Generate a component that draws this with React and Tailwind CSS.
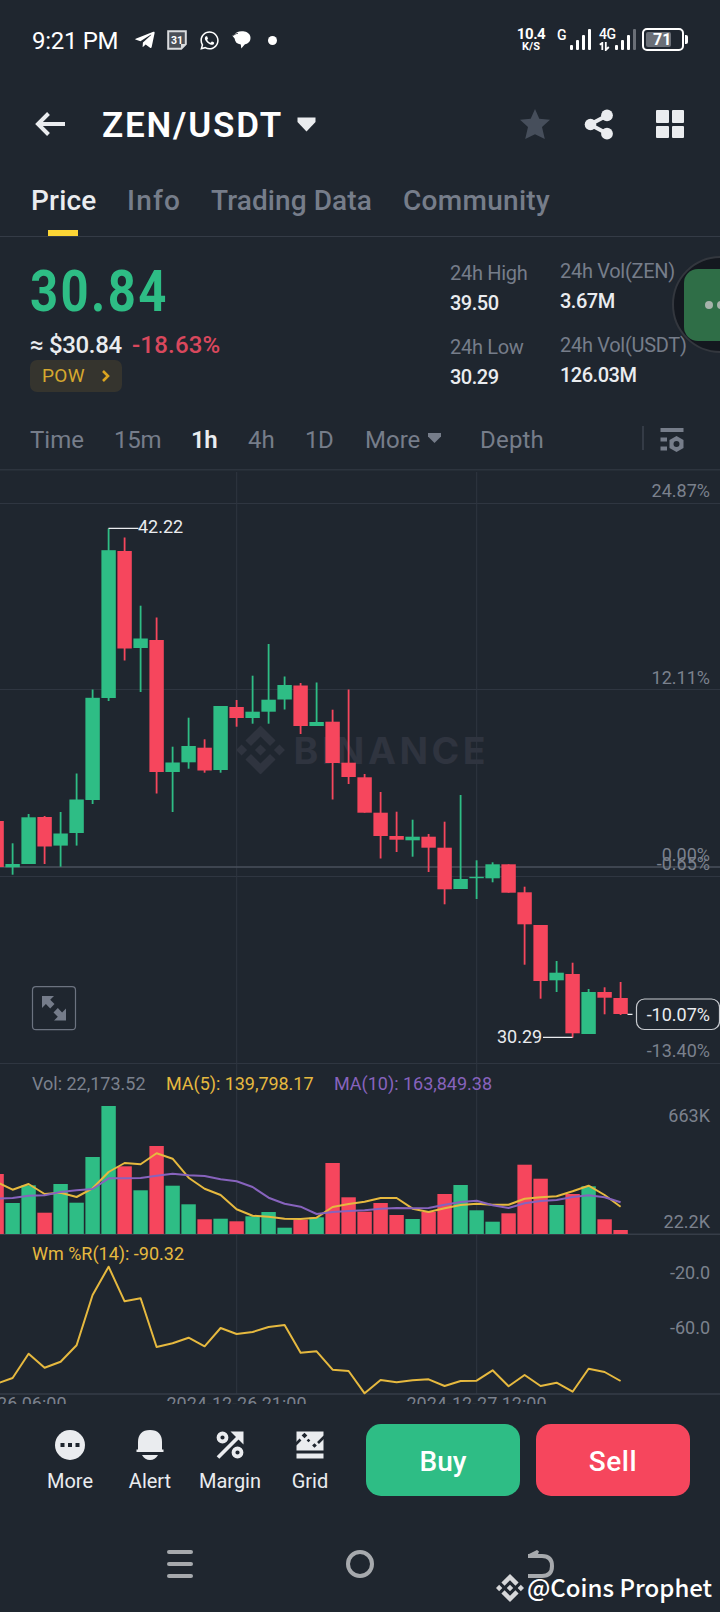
import { FaTelegramPlane, FaWhatsapp } from "react-icons/fa";

const GREEN = "#2ebd85";
const RED = "#f6465d";
const YELLOW = "#e6b93f";
const PURPLE = "#8763bd";
const GRID = "#2f3641";
const MUTED = "#7b818d";

// [up, high, bodyTop, bodyBottom, low, volumeTop]
const candles = [
  [0, 821, 821, 867, 867, 1174],
  [1, 843.3, 864, 867.3, 874.7, 1203],
  [1, 814, 817.3, 864, 864, 1185.3],
  [0, 816, 817, 846.5, 864, 1212.7],
  [1, 812, 833.5, 845.6, 866.7, 1184],
  [1, 773.5, 799.5, 833, 845.6, 1202.7],
  [1, 689.5, 697.8, 800, 804, 1157],
  [1, 528.5, 550.2, 698, 701, 1106],
  [0, 537.5, 551, 648.5, 660.5, 1166.3],
  [1, 605.7, 638.5, 648, 692, 1190.3],
  [0, 617.5, 640, 772, 793.5, 1146],
  [1, 746.7, 762.5, 772, 812, 1185.7],
  [1, 717.7, 746, 762.3, 768.7, 1204.3],
  [0, 739.3, 747.7, 770.5, 772.7, 1219.3],
  [1, 706, 706, 770, 772.7, 1218.7],
  [0, 700, 707, 718, 726.7, 1221.3],
  [1, 675.7, 711.7, 718, 723.7, 1216.3],
  [1, 644, 699.7, 711.7, 723.7, 1212],
  [1, 676.5, 685, 699.5, 709.5, 1227.7],
  [0, 683, 685.5, 726, 734, 1219.7],
  [1, 682.5, 722, 726, 726, 1217.3],
  [0, 709.7, 721.7, 763, 799.5, 1163],
  [0, 689.5, 762.7, 777, 784, 1197.3],
  [0, 774, 777.3, 812.7, 812.7, 1211.7],
  [0, 792, 812.7, 836, 858.5, 1203],
  [0, 811.7, 836, 839.7, 852, 1215],
  [1, 819.7, 836.7, 840.3, 856.7, 1219],
  [0, 834, 836.7, 847.7, 872, 1212],
  [0, 821.7, 847.7, 889.3, 904.3, 1194],
  [1, 795, 879, 889, 889, 1185],
  [1, 860.3, 876.8, 878.2, 899, 1210.3],
  [1, 862.3, 864.3, 878.3, 882.3, 1221.7],
  [0, 864.3, 864.3, 892.7, 892.7, 1213.3],
  [0, 886.7, 892.3, 924.3, 964.7, 1164.7],
  [0, 925, 925, 981, 998.7, 1178.7],
  [1, 961, 972.7, 980.3, 992, 1205],
  [0, 962.7, 974, 1033.3, 1037.7, 1194],
  [1, 989, 992, 1034, 1034, 1186.3],
  [0, 987.3, 992, 997.7, 1014.3, 1219.3],
  [0, 982, 998, 1014, 1015, 1230],
];

const ma5 = [
  366, 389, 372, 402, 398, 411, 385, 336, 309, 313, 280, 296, 353, 386, 405, 448, 467, 470, 476, 477,
  473, 441, 432, 425, 414, 414, 446, 456, 445, 435, 431, 434, 434, 416, 412, 409, 394, 377, 405, 440,
];
const ma10 = [
  416, 414, 407, 406, 396, 391, 387, 355, 355, 354, 347, 341, 346, 348, 358, 364, 381, 413, 431, 440,
  462, 456, 453, 451, 446, 444, 445, 444, 434, 426, 422, 436, 444, 430, 423, 420, 411, 406, 412, 427,
];
const williams = [
  971, 954, 881, 923, 905, 856, 705, 620, 724, 715, 861, 850, 833, 859, 804, 822, 816, 801, 795, 878,
  874, 929, 933, 1000, 960, 967, 961, 958, 978, 963, 962, 931, 979, 945, 978, 968, 995, 926, 936, 963,
];

const cx = (i) => 16 * i - 3.4;
const toPoints = (values) => values.map((v, i) => `${cx(i)},${(1060 + v / 3).toFixed(1)}`).join(" ");

const axisLabels = [
  ["24.87%", 497],
  ["12.11%", 684.3],
  ["0.00%", 861],
  ["-0.65%", 870],
  ["-13.40%", 1057],
  ["663K", 1122],
  ["22.2K", 1228],
  ["-20.0", 1279],
  ["-60.0", 1334],
];

function BinanceMark(props) {
  return (
    <svg viewBox="0 0 126.6 126.6" fill="currentColor" {...props}>
      <path d="M38.7 53.2 63.3 28.6l24.6 24.6 14.3-14.3L63.3 0 24.4 38.9zM0 63.3 14.3 49l14.3 14.3-14.3 14.3zM38.7 73.4 63.3 98l24.6-24.6 14.3 14.3-38.9 38.9-38.9-38.9zM98 63.3 112.3 49l14.3 14.3-14.3 14.3zM77.8 63.3 63.3 48.8 48.8 63.3l14.5 14.5z" />
    </svg>
  );
}

function StatusBar() {
  return (
    <div className="flex h-20 items-center pl-8 pr-8 text-white">
      <span className="w-[102px] pt-px text-[24px] leading-none tracking-[-0.3px]">9:21 PM</span>
      <FaTelegramPlane className="size-[22px]" />
      <svg className="ml-[11px] size-5" viewBox="0 0 20 20">
        <path d="M1.2 1.2h17.6v13l-4.6 4.6h-13z" fill="#4a4f57" stroke="#d9dbde" strokeWidth="2" />
        <path d="M14 19v-5h5z" fill="#d9dbde" />
        <text x="10" y="13.6" textAnchor="middle" fontSize="10.5" fontWeight="700" fill="#fff">31</text>
      </svg>
      <FaWhatsapp className="ml-3 size-[21px]" />
      <svg className="ml-3 h-[18px] w-[19px]" viewBox="0 0 19 18" fill="currentColor">
        <path d="M5 1.2C7 .2 10 0 12.500.5c3.500.6 6 3 6 6.300 0 4-2.500 6-5.800 6.600L9.300 17.500 8.800 13.500C5 13 3 11 2.600 7.500L.2 4.500C1.500 4.500 2.500 3.200 5 1.200z" />
        <path d="M.5 4.600C2.500 4.300 3 2.500 6 2.300" stroke="#1f262f" strokeWidth=".8" fill="none" />
      </svg>
      <span className="ml-[17px] size-[9px] rounded-full bg-white" />

      <div className="ml-auto flex items-start">
        <div className="flex w-7 flex-col items-center font-bold leading-none">
          <span className="text-[15px] leading-[14px] tracking-[-0.4px]">10.4</span>
          <span className="text-[11px] leading-[12px]">K/S</span>
        </div>
        <span className="ml-3 w-[13px] text-[14px] font-medium leading-[16px]">G</span>
        <svg className="mt-[1px] h-[23px] w-[22px]" viewBox="0 0 22 23" fill="currentColor">
          <rect x="0" y="17" width="3" height="5" rx="1" />
          <rect x="6" y="12" width="3" height="10" rx="1" />
          <rect x="12" y="7" width="3" height="15" rx="1" />
          <rect x="18" y="1" width="3" height="21" rx="1" />
        </svg>
        <div className="ml-[7px] flex w-4 flex-col">
          <span className="text-[14px] font-medium leading-[15px] tracking-[-0.5px]">4G</span>
          <svg className="h-[9px] w-[11px]" viewBox="0 0 11 9" stroke="currentColor" strokeWidth="1.800" fill="none">
            <path d="M.8 2.800 3.300.9V8M6.800 0v8L9.800 5" />
          </svg>
        </div>
        <svg className="mt-[1px] h-[23px] w-[21px]" viewBox="0 0 21 23" fill="currentColor">
          <rect x="0" y="17" width="3" height="5" rx="1" />
          <rect x="6" y="12" width="3" height="10" rx="1" />
          <rect x="12" y="7" width="3" height="15" rx="1" />
          <rect x="18" y="1" width="3" height="21" rx="1" fill="#6a6f77" />
        </svg>
        <div className="ml-1.5 mt-[1px] flex h-[23px] w-[42px] items-center rounded-[5px] border-2 border-white p-[2px]">
          <div className="flex h-full w-[25px] items-center rounded-[2px] bg-[#6a6f77] pl-[7px] text-[16px] font-bold leading-none">
            71
          </div>
        </div>
        <span className="ml-px mt-2 h-[9px] w-[3px] rounded-r-[2px] bg-white" />
      </div>
    </div>
  );
}

function Header() {
  return (
    <div className="flex h-[88px] items-center pl-[35px] pr-9 text-[#eaecef]">
      <svg className="h-6 w-[31px]" viewBox="0 0 31 24" fill="none" stroke="currentColor" strokeWidth="4">
        <path d="M30 12H4M13.500 1.500 3 12l10.500 10.500" />
      </svg>
      <h1 className="ml-9 w-[195px] whitespace-nowrap pt-[3px] text-[35px] font-semibold leading-none tracking-[1.8px] text-white">
        ZEN/USDT
      </h1>
      <svg className="h-[15px] w-[19px]" viewBox="0 0 19 15" fill="currentColor">
        <path d="M.5.5h18v4.500L9.500 14.500.5 5z" />
      </svg>
      <svg className="ml-auto size-[30px]" viewBox="0 0 30 30" fill="#464e5b">
        <path d="M15 0l4.300 9.800 10.700 1-8 7.200 2.800 12L15 25.300 5.200 30 8 18 0 10.800l10.700-1z" />
      </svg>
      <svg className="ml-[34px] h-[31px] w-[30px]" viewBox="0 0 30 31" fill="currentColor" stroke="currentColor">
        <path d="M23 6.500 6 15.500l17 9" strokeWidth="4" fill="none" />
        <circle cx="6.500" cy="15.500" r="5.800" stroke="none" />
        <circle cx="23" cy="6.300" r="5.900" stroke="none" />
        <circle cx="23" cy="24.700" r="5.900" stroke="none" />
      </svg>
      <div className="ml-[42px] grid size-[28px] grid-cols-2 gap-[3px]">
        <span className="rounded-[1px] bg-[#eaecef]" />
        <span className="rounded-[1px] bg-[#eaecef]" />
        <span className="rounded-[1px] bg-[#eaecef]" />
        <span className="rounded-[1px] bg-[#eaecef]" />
      </div>
    </div>
  );
}

function Tabs() {
  return (
    <div className="flex h-[69px] border-b border-[#343b46] pl-[31px] text-[28px] font-medium leading-[66px] text-[#767d8a]">
      <div className="flex w-[96px] flex-col text-[#eaecef]">
        <span className="h-[62px] leading-[66px] tracking-[0.2px]">Price</span>
        <span className="ml-[17px] h-[6px] w-[30px] bg-[#fcd535]" />
      </div>
      <span className="w-[84px] tracking-[1.2px]">Info</span>
      <span className="w-[192px] whitespace-nowrap tracking-[0.1px]">Trading Data</span>
      <span className="whitespace-nowrap tracking-[0.3px]">Community</span>
    </div>
  );
}

function Stat({ label, value }) {
  return (
    <div className="flex h-[74px] flex-col whitespace-nowrap text-[20px]">
      <span className="h-[30px] leading-[29px] tracking-[-0.3px] text-[#767d8a]">{label}</span>
      <span className="h-[29px] font-medium leading-[29px] tracking-[-0.5px] text-[#eaecef]">{value}</span>
    </div>
  );
}

function PriceSummary() {
  return (
    <div className="relative flex h-[173px] overflow-hidden pl-[30px]">
      <div className="flex w-[420px] flex-col pt-[25px]">
        <span className="h-[60px] w-[200px] origin-left scale-x-[0.86] text-[57px] font-bold leading-[60px] tracking-[2.8px] text-[#2ebd85]">
          30.84
        </span>
        <div className="mt-[9px] flex h-[28px] text-[24px] font-medium leading-[28px]">
          <span className="w-[102px] whitespace-nowrap tracking-[-0.35px] text-[#eaecef]">≈ $30.84</span>
          <span className="tracking-[0.2px] text-[#d9485d]">-18.63%</span>
        </div>
        <div className="mt-px flex h-8 w-[92px] items-center rounded-[7px] bg-[#35342e] pl-[12px] text-[19px] text-[#d5a82f]">
          <span className="w-[60px] tracking-[0.3px]">POW</span>
          <svg className="h-[12px] w-[8px]" viewBox="0 0 8 12" fill="none" stroke="#dba520" strokeWidth="2.600">
            <path d="M1 1l5 5-5 5" />
          </svg>
        </div>
      </div>
      <div className="w-[110px] pt-[22px]">
        <Stat label="24h High" value="39.50" />
        <Stat label="24h Low" value="30.29" />
      </div>
      <div className="pt-5">
        <Stat label="24h Vol(ZEN)" value="3.67M" />
        <Stat label="24h Vol(USDT)" value="126.03M" />
      </div>

      {/* floating chat bubble */}
      <div className="absolute left-[672px] top-[19px] flex size-[97px] items-center rounded-full border-2 border-[#33373e] bg-[#14181f] pl-[10px]">
        <div className="flex h-[72px] w-[74px] shrink-0 items-center gap-[4px] rounded-[14px] bg-[#2f6e47] pl-[21px]">
          <span className="size-2 rounded-full bg-[#a6b3ab]" />
          <span className="size-2 rounded-full bg-[#a6b3ab]" />
        </div>
      </div>
    </div>
  );
}

function Intervals() {
  return (
    <div className="flex h-[59px] items-center whitespace-nowrap pl-[30px] text-[24px] leading-none text-[#767d8a]">
      <span className="w-[84px]">Time</span>
      <span className="w-[77px] tracking-[-0.3px]">15m</span>
      <span className="w-[57px] font-semibold tracking-[-0.5px] text-[#eaecef]">1h</span>
      <span className="w-[57px]">4h</span>
      <span className="w-[60px] tracking-[-0.4px]">1D</span>
      <span className="w-[63px]">More</span>
      <svg className="-mt-1 h-[10px] w-[13px]" viewBox="0 0 13 10" fill="currentColor">
        <path d="M0 0h13v3.500L6.500 10 0 3.500z" />
      </svg>
      <span className="ml-[39px] w-[162px] tracking-[0.2px]">Depth</span>
      <span className="-mt-1 h-6 w-[2px] bg-[#343b46]" />
      <svg className="ml-[16px] h-[24px] w-[24px]" viewBox="0 0 24 24" fill="currentColor">
        <path d="M.5 0h23v4H.5zM.5 9.500H7v4H.5zM.5 18.500H7v4H.5z" />
        <path fillRule="evenodd" d="M16.500 8l7 4v8l-7 4-7-4v-8zm0 5a3 3 0 100 6 3 3 0 000-6z" />
      </svg>
    </div>
  );
}

function Chart() {
  return (
    <svg className="block h-[935px] w-full" viewBox="0 469 720 935" fontSize="18">
      <path d="M0 469.500H720" stroke="#2d343e" strokeWidth="2" />
      <path d="M0 503.500H720M0 689.500H720M0 876.500H720M0 1063.500H720M236.700 472V1394M476.700 472V1394" stroke={GRID} />
      <path d="M0 1234.300H720M0 1394H720" stroke="#363d48" strokeWidth="1.600" />

      <g fill="#2f343f" color="#2f343f">
        <BinanceMark x="236" y="725.500" width="49" height="49" />
        <text x="293.500" y="764" fontFamily="Inter, sans-serif" fontSize="37.500" fontWeight="700" textLength="192">BINANCE</text>
      </g>
      <path d="M0 867H720" stroke="#4a515d" strokeWidth="1.600" />

      {candles.map(([up, high, top, bottom, low, vol], i) => (
        <g key={i} fill={up ? GREEN : RED}>
          <rect x={cx(i) - 0.9} y={high} width="1.800" height={low - high} />
          <rect x={cx(i) - 7.2} y={top} width="14.400" height={bottom - top} />
          <rect x={cx(i) - 7.2} y={vol} width="14.400" height={1234 - vol} />
        </g>
      ))}

      <g fill="none" strokeWidth="2" strokeLinejoin="round">
        <polyline points={toPoints(ma5)} stroke={YELLOW} />
        <polyline points={toPoints(ma10)} stroke={PURPLE} />
        <polyline points={toPoints(williams)} stroke={YELLOW} />
      </g>

      <g stroke="#eaecef" strokeWidth="1.200">
        <path d="M108.500 528.400H138.500M543 1037.400H572.500M627.500 1014.300H632.500" />
      </g>
      <g fill="#eaecef">
        <text x="138" y="532.800">42.22</text>
        <text x="497" y="1042.700">30.29</text>
      </g>

      <g fill={MUTED} textAnchor="end">
        {axisLabels.map(([label, y]) => (
          <text key={label} x="710" y={y}>{label}</text>
        ))}
      </g>
      <rect x="636.500" y="999" width="83" height="30.500" rx="8" fill="#1f262f" stroke="#c9ccd1" strokeWidth="1.200" />
      <text x="710" y="1021" textAnchor="end" fill="#eaecef">-10.07%</text>

      <text x="32" y="1090" fill={MUTED} textLength="113.500">Vol: 22,173.52</text>
      <text x="166" y="1090" fill={YELLOW} textLength="147.500">MA(5): 139,798.17</text>
      <text x="334" y="1090" fill={PURPLE} textLength="158">MA(10): 163,849.38</text>
      <text x="32" y="1260" fill={YELLOW} textLength="152">Wm %R(14): -90.32</text>

      <g fill={MUTED} textAnchor="middle">
        <text x="-3.500" y="1410" textLength="140">2024-12-26 06:00</text>
        <text x="236.500" y="1410" textLength="140">2024-12-26 21:00</text>
        <text x="476.500" y="1410" textLength="140">2024-12-27 12:00</text>
      </g>

      <rect x="32.500" y="986.700" width="43" height="43" rx="3.500" fill="none" stroke="#6c7380" strokeWidth="1.200" />
      <path d="M42 996h12l-3.800 3.800 4.300 4.300-4.300 4.300-4.300-4.300L42 1008zM66 1020.500H54l3.800-3.800-4.300-4.300 4.300-4.300 4.300 4.300 3.900-3.900z" fill="#757c8a" />
    </svg>
  );
}

function Action({ label, children }) {
  return (
    <div className="flex w-20 flex-col items-center text-[20px] text-[#eaecef]">
      <svg className="h-8 w-8" viewBox="0 0 32 32" fill="currentColor">{children}</svg>
      <span className="mt-[5px] leading-[30px]">{label}</span>
    </div>
  );
}

function ActionBar() {
  return (
    <div className="flex h-[116px] pl-[30px] pt-5">
      <div className="flex pt-[5px]">
        <Action label="More">
          <circle cx="16" cy="16" r="15" />
          <path d="M6.500 14h4v4h-4zM14 14h4v4h-4zM21.500 14h4v4h-4z" fill="#1f262f" />
        </Action>
        <Action label="Alert">
          <path d="M4 13C4 5.500 8 1 16 1s12 4.500 12 12v7.500h1.500V23h-27v-2.500H4z" />
          <path d="M8 26h16c-2 3.500-4.500 5-8 5s-6-1.500-8-5z" />
        </Action>
        <Action label="Margin">
          <g fill="none" stroke="currentColor" strokeWidth="3.800">
            <circle cx="8.500" cy="8.500" r="4" />
            <circle cx="23.500" cy="23.500" r="4" />
            <path d="M4 28.500 25 7.500" />
          </g>
          <path d="M16.500 2.500h13v13z" />
        </Action>
        <Action label="Grid">
          <path d="M2.500 2.500h27v19h-27zM2.500 24.500h27v5h-27z" />
          <g stroke="#1f262f" strokeWidth="2.600" fill="#1f262f">
            <path d="M1.500 15.500 6.500 10.500M24 14 30.500 7.500" />
            <path d="M8.500 6.500l2-2 2 2-2 2zM13.500 11.500l1-1 1 1-1 1zM19 16.500l1.500-1.500 1.500 1.500-1.500 1.500z" strokeWidth="1.200" />
          </g>
        </Action>
      </div>
      <div className="ml-4 flex gap-4 text-[28px] font-medium text-white">
        <button className="h-[72px] w-[154px] rounded-[15px] bg-[#2ebd85] pt-1">Buy</button>
        <button className="h-[72px] w-[154px] rounded-[15px] bg-[#f6465d] pt-1 tracking-[0.6px]">Sell</button>
      </div>
    </div>
  );
}

function SystemNav() {
  return (
    <div className="relative flex h-[92px] items-start pl-[167px] pt-[30px] text-[#a6a9ad]">
      <div className="flex w-[26px] flex-col gap-2">
        <span className="h-1 rounded-full bg-[#a6a9ad]" />
        <span className="h-1 rounded-full bg-[#a6a9ad]" />
        <span className="h-1 rounded-full bg-[#a6a9ad]" />
      </div>
      <span className="ml-[153px] size-7 rounded-full border-4 border-[#a6a9ad]" />
      <svg className="ml-[154px] h-7 w-[27px]" viewBox="0 0 27 28" fill="none" stroke="currentColor" strokeWidth="4">
        <path d="M0 6h14c7 0 10 4 10 10s-3 10-10 10H0" />
        <path d="M0 4.500 9 0l2 1.500-2 5-9 1z" fill="currentColor" stroke="none" />
      </svg>
      <div className="absolute left-[496px] top-[50px] flex h-9 items-center">
        <BinanceMark className="size-7 text-[#d6d7d9]" />
        <span className="-mt-0.5 ml-[3px] whitespace-nowrap font-['Noto_Sans_CJK_SC',sans-serif] text-[24px] font-medium leading-9 text-white">
          @Coins Prophet
        </span>
      </div>
    </div>
  );
}

export default function App() {
  return (
    <div className="h-[1612px] w-[720px] overflow-hidden bg-[#1f262f] font-['Roboto',sans-serif]">
      <StatusBar />
      <Header />
      <Tabs />
      <PriceSummary />
      <Intervals />
      <Chart />
      <ActionBar />
      <SystemNav />
    </div>
  );
}
